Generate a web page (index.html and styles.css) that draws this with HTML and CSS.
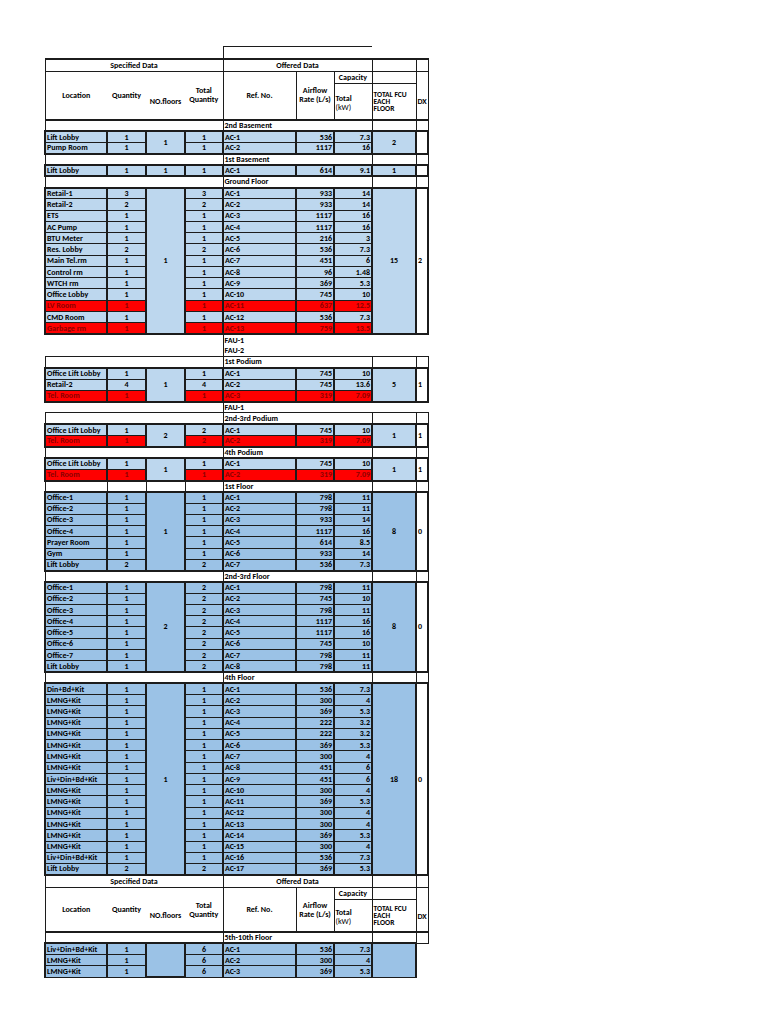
FILE: index.html
```html
<!DOCTYPE html>
<html>
<head>
<meta charset="utf-8">
<title>FCU Schedule</title>
<link rel="stylesheet" href="styles.css">
</head>
<body>
<table class="sheet">
<colgroup>
<col class="w1"><col class="w2"><col class="w3"><col class="w4"><col class="w5"><col class="w6"><col class="w7"><col class="w8"><col class="w9">
</colgroup>
<tbody>
<tr class="h0"><td colspan="4" class="none"></td><td colspan="3" class="tbox"></td><td colspan="2" class="none"></td></tr>
<tr class="hA"><td colspan="4" class="hc">Specified Data</td><td colspan="3" class="hc">Offered Data</td><td class="hb"></td><td class="hb"></td></tr>
<tr class="hB"><td rowspan="2" class="hl">Location</td><td rowspan="2" class="hm">Quantity</td><td rowspan="2" class="hm hn">NO.floors</td><td rowspan="2" class="hr">Total<br>Quantity</td><td rowspan="2" class="hx">Ref. No.</td><td rowspan="2" class="hx">Airflow<br>Rate (L/s)</td><td class="hcap">Capacity</td><td class="hb"></td><td rowspan="2" class="hdx">DX</td></tr>
<tr class="hC"><td class="hkw">Total<br><span class="thin">(kW)</span></td><td class="hfcu"><div>TOTAL FCU</div><div>EACH</div><div>FLOOR</div></td></tr>

<tr class="sec"><td colspan="4"></td><td colspan="3" class="f">2nd Basement</td><td></td><td></td></tr>
<tr class="g1 top"><td class="l">Lift Lobby</td><td class="c">1</td><td class="c sp" rowspan="2">1</td><td class="c">1</td><td class="f">AC-1</td><td class="r">536</td><td class="r">7.3</td><td class="c sp" rowspan="2">2</td><td class="w sp" rowspan="2"></td></tr>
<tr class="g1 bot"><td class="l">Pump Room</td><td class="c">1</td><td class="c">1</td><td class="f">AC-2</td><td class="r">1117</td><td class="r">16</td></tr>

<tr class="sec"><td colspan="4"></td><td colspan="3" class="f">1st Basement</td><td></td><td></td></tr>
<tr class="g1 top bot"><td class="l">Lift Lobby</td><td class="c">1</td><td class="c">1</td><td class="c">1</td><td class="f">AC-1</td><td class="r">614</td><td class="r">9.1</td><td class="c">1</td><td class="w"></td></tr>

<tr class="sec"><td colspan="4"></td><td colspan="3" class="f">Ground Floor</td><td></td><td></td></tr>
<tr class="g1 top"><td class="l">Retail-1</td><td class="c">3</td><td class="c sp" rowspan="13">1</td><td class="c">3</td><td class="f">AC-1</td><td class="r">933</td><td class="r">14</td><td class="c sp" rowspan="13">15</td><td class="w sp" rowspan="13">2</td></tr>
<tr class="g1"><td class="l">Retail-2</td><td class="c">2</td><td class="c">2</td><td class="f">AC-2</td><td class="r">933</td><td class="r">14</td></tr>
<tr class="g1"><td class="l">ETS</td><td class="c">1</td><td class="c">1</td><td class="f">AC-3</td><td class="r">1117</td><td class="r">16</td></tr>
<tr class="g1"><td class="l">AC Pump</td><td class="c">1</td><td class="c">1</td><td class="f">AC-4</td><td class="r">1117</td><td class="r">16</td></tr>
<tr class="g1"><td class="l">BTU Meter</td><td class="c">1</td><td class="c">1</td><td class="f">AC-5</td><td class="r">216</td><td class="r">3</td></tr>
<tr class="g1"><td class="l">Res. Lobby</td><td class="c">2</td><td class="c">2</td><td class="f">AC-6</td><td class="r">536</td><td class="r">7.3</td></tr>
<tr class="g1"><td class="l">Main Tel.rm</td><td class="c">1</td><td class="c">1</td><td class="f">AC-7</td><td class="r">451</td><td class="r">6</td></tr>
<tr class="g1"><td class="l">Control rm</td><td class="c">1</td><td class="c">1</td><td class="f">AC-8</td><td class="r">96</td><td class="r">1.48</td></tr>
<tr class="g1"><td class="l">WTCH rm</td><td class="c">1</td><td class="c">1</td><td class="f">AC-9</td><td class="r">369</td><td class="r">5.3</td></tr>
<tr class="g1"><td class="l">Office Lobby</td><td class="c">1</td><td class="c">1</td><td class="f">AC-10</td><td class="r">745</td><td class="r">10</td></tr>
<tr class="g1"><td class="l x">LV Room</td><td class="c x">1</td><td class="c x">1</td><td class="f x">AC-11</td><td class="r x">637</td><td class="r x">12.5</td></tr>
<tr class="g1"><td class="l">CMD Room</td><td class="c">1</td><td class="c">1</td><td class="f">AC-12</td><td class="r">536</td><td class="r">7.3</td></tr>
<tr class="g1 bot"><td class="l x">Garbage rm</td><td class="c x">1</td><td class="c x">1</td><td class="f x">AC-13</td><td class="r x">759</td><td class="r x">13.5</td></tr>

<tr class="fau"><td colspan="4"></td><td colspan="3" class="f">FAU-1</td><td colspan="2"></td></tr>
<tr class="fau"><td colspan="4"></td><td colspan="3" class="f">FAU-2</td><td colspan="2"></td></tr>

<tr class="sec"><td colspan="4"></td><td colspan="3" class="f">1st Podium</td><td></td><td></td></tr>
<tr class="g1 top"><td class="l">Office Lift Lobby</td><td class="c">1</td><td class="c sp" rowspan="3">1</td><td class="c">1</td><td class="f">AC-1</td><td class="r">745</td><td class="r">10</td><td class="c sp" rowspan="3">5</td><td class="w sp" rowspan="3">1</td></tr>
<tr class="g1"><td class="l">Retail-2</td><td class="c">4</td><td class="c">4</td><td class="f">AC-2</td><td class="r">745</td><td class="r">13.6</td></tr>
<tr class="g1 bot"><td class="l x">Tel. Room</td><td class="c x">1</td><td class="c x">1</td><td class="f x">AC-3</td><td class="r x">319</td><td class="r x">7.09</td></tr>

<tr class="fau"><td colspan="4"></td><td colspan="3" class="f">FAU-1</td><td colspan="2"></td></tr>

<tr class="sec"><td colspan="4"></td><td colspan="3" class="f">2nd-3rd Podium</td><td></td><td></td></tr>
<tr class="g1 top"><td class="l">Office Lift Lobby</td><td class="c">1</td><td class="c sp" rowspan="2">2</td><td class="c">2</td><td class="f">AC-1</td><td class="r">745</td><td class="r">10</td><td class="c sp" rowspan="2">1</td><td class="w sp" rowspan="2">1</td></tr>
<tr class="g1 bot"><td class="l x">Tel. Room</td><td class="c x">1</td><td class="c x">2</td><td class="f x">AC-2</td><td class="r x">319</td><td class="r x">7.09</td></tr>

<tr class="sec"><td colspan="4"></td><td colspan="3" class="f">4th Podium</td><td></td><td></td></tr>
<tr class="g1 top"><td class="l">Office Lift Lobby</td><td class="c">1</td><td class="c sp" rowspan="2">1</td><td class="c">1</td><td class="f">AC-1</td><td class="r">745</td><td class="r">10</td><td class="c sp" rowspan="2">1</td><td class="w sp" rowspan="2">1</td></tr>
<tr class="g1 bot"><td class="l x">Tel. Room</td><td class="c x">1</td><td class="c x">1</td><td class="f x">AC-2</td><td class="r x">319</td><td class="r x">7.09</td></tr>

<tr class="sec"><td></td><td></td><td></td><td></td><td colspan="3" class="f">1st Floor</td><td></td><td></td></tr>
<tr class="g2 top"><td class="l">Office-1</td><td class="c">1</td><td class="c sp" rowspan="7">1</td><td class="c">1</td><td class="f">AC-1</td><td class="r">798</td><td class="r">11</td><td class="c sp" rowspan="7">8</td><td class="w sp" rowspan="7">0</td></tr>
<tr class="g2"><td class="l">Office-2</td><td class="c">1</td><td class="c">1</td><td class="f">AC-2</td><td class="r">798</td><td class="r">11</td></tr>
<tr class="g2"><td class="l">Office-3</td><td class="c">1</td><td class="c">1</td><td class="f">AC-3</td><td class="r">933</td><td class="r">14</td></tr>
<tr class="g2"><td class="l">Office-4</td><td class="c">1</td><td class="c">1</td><td class="f">AC-4</td><td class="r">1117</td><td class="r">16</td></tr>
<tr class="g2"><td class="l">Prayer Room</td><td class="c">1</td><td class="c">1</td><td class="f">AC-5</td><td class="r">614</td><td class="r">8.5</td></tr>
<tr class="g2"><td class="l">Gym</td><td class="c">1</td><td class="c">1</td><td class="f">AC-6</td><td class="r">933</td><td class="r">14</td></tr>
<tr class="g2 bot"><td class="l">Lift Lobby</td><td class="c">2</td><td class="c">2</td><td class="f">AC-7</td><td class="r">536</td><td class="r">7.3</td></tr>

<tr class="sec"><td colspan="4"></td><td colspan="3" class="f">2nd-3rd Floor</td><td></td><td></td></tr>
<tr class="g2 top"><td class="l">Office-1</td><td class="c">1</td><td class="c sp" rowspan="8">2</td><td class="c">2</td><td class="f">AC-1</td><td class="r">798</td><td class="r">11</td><td class="c sp" rowspan="8">8</td><td class="w sp" rowspan="8">0</td></tr>
<tr class="g2"><td class="l">Office-2</td><td class="c">1</td><td class="c">2</td><td class="f">AC-2</td><td class="r">745</td><td class="r">10</td></tr>
<tr class="g2"><td class="l">Office-3</td><td class="c">1</td><td class="c">2</td><td class="f">AC-3</td><td class="r">798</td><td class="r">11</td></tr>
<tr class="g2"><td class="l">Office-4</td><td class="c">1</td><td class="c">2</td><td class="f">AC-4</td><td class="r">1117</td><td class="r">16</td></tr>
<tr class="g2"><td class="l">Office-5</td><td class="c">1</td><td class="c">2</td><td class="f">AC-5</td><td class="r">1117</td><td class="r">16</td></tr>
<tr class="g2"><td class="l">Office-6</td><td class="c">1</td><td class="c">2</td><td class="f">AC-6</td><td class="r">745</td><td class="r">10</td></tr>
<tr class="g2"><td class="l">Office-7</td><td class="c">1</td><td class="c">2</td><td class="f">AC-7</td><td class="r">798</td><td class="r">11</td></tr>
<tr class="g2 bot"><td class="l">Lift Lobby</td><td class="c">1</td><td class="c">2</td><td class="f">AC-8</td><td class="r">798</td><td class="r">11</td></tr>

<tr class="sec"><td colspan="4"></td><td colspan="3" class="f">4th Floor</td><td></td><td></td></tr>
<tr class="g2 top"><td class="l">Din+Bd+Kit</td><td class="c">1</td><td class="c sp" rowspan="17">1</td><td class="c">1</td><td class="f">AC-1</td><td class="r">536</td><td class="r">7.3</td><td class="c sp" rowspan="17">18</td><td class="w sp" rowspan="17">0</td></tr>
<tr class="g2"><td class="l">LMNG+Kit</td><td class="c">1</td><td class="c">1</td><td class="f">AC-2</td><td class="r">300</td><td class="r">4</td></tr>
<tr class="g2"><td class="l">LMNG+Kit</td><td class="c">1</td><td class="c">1</td><td class="f">AC-3</td><td class="r">369</td><td class="r">5.3</td></tr>
<tr class="g2"><td class="l">LMNG+Kit</td><td class="c">1</td><td class="c">1</td><td class="f">AC-4</td><td class="r">222</td><td class="r">3.2</td></tr>
<tr class="g2"><td class="l">LMNG+Kit</td><td class="c">1</td><td class="c">1</td><td class="f">AC-5</td><td class="r">222</td><td class="r">3.2</td></tr>
<tr class="g2"><td class="l">LMNG+Kit</td><td class="c">1</td><td class="c">1</td><td class="f">AC-6</td><td class="r">369</td><td class="r">5.3</td></tr>
<tr class="g2"><td class="l">LMNG+Kit</td><td class="c">1</td><td class="c">1</td><td class="f">AC-7</td><td class="r">300</td><td class="r">4</td></tr>
<tr class="g2"><td class="l">LMNG+Kit</td><td class="c">1</td><td class="c">1</td><td class="f">AC-8</td><td class="r">451</td><td class="r">6</td></tr>
<tr class="g2"><td class="l">Liv+Din+Bd+Kit</td><td class="c">1</td><td class="c">1</td><td class="f">AC-9</td><td class="r">451</td><td class="r">6</td></tr>
<tr class="g2"><td class="l">LMNG+Kit</td><td class="c">1</td><td class="c">1</td><td class="f">AC-10</td><td class="r">300</td><td class="r">4</td></tr>
<tr class="g2"><td class="l">LMNG+Kit</td><td class="c">1</td><td class="c">1</td><td class="f">AC-11</td><td class="r">369</td><td class="r">5.3</td></tr>
<tr class="g2"><td class="l">LMNG+Kit</td><td class="c">1</td><td class="c">1</td><td class="f">AC-12</td><td class="r">300</td><td class="r">4</td></tr>
<tr class="g2"><td class="l">LMNG+Kit</td><td class="c">1</td><td class="c">1</td><td class="f">AC-13</td><td class="r">300</td><td class="r">4</td></tr>
<tr class="g2"><td class="l">LMNG+Kit</td><td class="c">1</td><td class="c">1</td><td class="f">AC-14</td><td class="r">369</td><td class="r">5.3</td></tr>
<tr class="g2"><td class="l">LMNG+Kit</td><td class="c">1</td><td class="c">1</td><td class="f">AC-15</td><td class="r">300</td><td class="r">4</td></tr>
<tr class="g2"><td class="l">Liv+Din+Bd+Kit</td><td class="c">1</td><td class="c">1</td><td class="f">AC-16</td><td class="r">536</td><td class="r">7.3</td></tr>
<tr class="g2 bot"><td class="l">Lift Lobby</td><td class="c">2</td><td class="c">2</td><td class="f">AC-17</td><td class="r">369</td><td class="r">5.3</td></tr>

<tr class="hA"><td colspan="4" class="hc">Specified Data</td><td colspan="3" class="hc">Offered Data</td><td class="hb"></td><td class="hb"></td></tr>
<tr class="hB2"><td rowspan="2" class="hl">Location</td><td rowspan="2" class="hm">Quantity</td><td rowspan="2" class="hm hn">NO.floors</td><td rowspan="2" class="hr">Total<br>Quantity</td><td rowspan="2" class="hx">Ref. No.</td><td rowspan="2" class="hx">Airflow<br>Rate (L/s)</td><td class="hcap">Capacity</td><td class="hb"></td><td rowspan="2" class="hdx">DX</td></tr>
<tr class="hC2"><td class="hkw">Total<br><span class="thin">(kW)</span></td><td class="hfcu"><div>TOTAL FCU</div><div>EACH</div><div>FLOOR</div></td></tr>

<tr class="sec s2"><td colspan="4"></td><td colspan="3" class="f">5th-10th Floor</td><td></td><td></td></tr>
<tr class="g2 top"><td class="l">Liv+Din+Bd+Kit</td><td class="c">1</td><td class="c sp" rowspan="3"></td><td class="c">6</td><td class="f">AC-1</td><td class="r">536</td><td class="r">7.3</td><td class="c sp open" rowspan="3"></td><td class="w none" rowspan="3"></td></tr>
<tr class="g2"><td class="l">LMNG+Kit</td><td class="c">1</td><td class="c">6</td><td class="f">AC-2</td><td class="r">300</td><td class="r">4</td></tr>
<tr class="g2 end"><td class="l">LMNG+Kit</td><td class="c">1</td><td class="c">6</td><td class="f">AC-3</td><td class="r">369</td><td class="r">5.3</td></tr>
</tbody>
</table>
</body>
</html>
```

FILE: styles.css
```css
body {
  margin: 0;
  background: #ffffff;
  font-family: Carlito, Lato, "Liberation Sans", sans-serif;
}

.sheet {
  border-collapse: collapse;
  table-layout: fixed;
  width: 384px;
  margin: 46px 0 0 44px;
  font-size: 8px;
  font-weight: 700;
  color: #000;
}

.w1 { width: 62px; }
.w2 { width: 39px; }
.w3 { width: 39px; }
.w4 { width: 38px; }
.w5 { width: 73px; }
.w6 { width: 38px; }
.w7 { width: 38px; }
.w8 { width: 44px; }
.w9 { width: 12px; }

.sheet td {
  padding: 0 1px;
  line-height: 9px;
  white-space: nowrap;
  overflow: hidden;
  vertical-align: middle;
  border: 1px solid #1c1c1c;
}

.sheet tr { height: 11.27px; }

/* header */
.h0 { height: 12px !important; }
.h0 td { border: none; }
.h0 td.tbox { border-top: 1px solid #1c1c1c; border-left: 1px solid #1c1c1c; }
.hA td { height: 11px; border-top-width: 2px; text-align: center; }
.hB, .hB2 { height: 12px !important; }
.hC { height: 37px !important; }
.hC2 { height: 33px !important; }
.hB td, .hB2 td, .hC td, .hC2 td { border-bottom-width: 2px; }
.hcap { border-bottom-width: 1px !important; text-align: center; font-weight: 600; }
.hb { border-bottom-width: 1px !important; }
.hl, .hm, .hr, .hx { text-align: center; font-weight: 600; }
.hl { border-right: none !important; }
.hm { border-left: none !important; border-right: none !important; }
.hr { border-left: none !important; }
.hn { padding-top: 12px !important; }
.hkw, .hfcu, .hdx { text-align: left; font-weight: 600; }
.hkw { padding-top: 3px !important; }
.hfcu { padding-top: 0; font-size: 7.5px; line-height: 7px !important; }
.hfcu div { height: 7px; line-height: 7px; }
.hdx { padding-top: 13px !important; }
.thin { font-weight: 400; }

/* section rows */
.sec td { background: #fff; }
.s2 { height: 11px !important; }

.fau td { border: none; background: #fff; }
.fau td.f { border-left: 1px solid #1c1c1c; }

/* data rows */
.g1 td { background: #bdd7ee; }
.g2 td { background: #9bc2e6; }
.g1 td, .g2 td {
  border-left-width: 2px;
  border-right-width: 2px;
}
.top td { border-top-width: 2px; }
.bot td, td.sp { border-bottom-width: 2px; }
.end td { border-bottom-width: 1px; }

.l { text-align: left; }
.c { text-align: center; }
.r { text-align: right; padding-right: 1px; }
.f { text-align: left; font-weight: 700; }

.sheet td.x { background: #ff0000; color: #8c0000; }
.sheet td.w { background: #ffffff; }
.sheet td.none { border: none; }
.sheet td.open { border-bottom: 1px solid #1c1c1c; }
```
